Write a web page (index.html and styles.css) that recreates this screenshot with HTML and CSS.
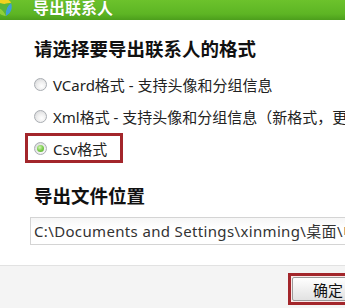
FILE: index.html
```html
<!DOCTYPE html>
<html lang="zh-CN">
<head>
    <meta charset="UTF-8">
    <title>导出联系人</title>
    <link rel="stylesheet" href="styles.css">
</head>
<body>
    <div class="window">
        <div class="titlebar">
            <svg class="logo" width="16" height="20" viewBox="0 0 16 20">
                <path d="M-4 2 C2 -2 9 -1 11 4 C6 5 1 6 -4 2 Z" fill="#f3d21f"/>
                <path d="M11 4 C13 9 11 14 6 17 C5 12 7 7 11 4 Z" fill="#3fa0d8"/>
                <path d="M6 17 C1 17 -3 13 -4 8 C1 9 4 12 6 17 Z" fill="#8fd03a"/>
                <path d="M-4 2 C1 6 6 5 11 4 C7 7 5 12 6 17 C4 12 1 9 -4 8 Z" fill="#59b53a"/>
            </svg>
            <span class="title">导出联系人</span>
        </div>

        <div class="content">
            <h2 class="heading">请选择要导出联系人的格式</h2>

            <label class="option">
                <span class="radio"></span>
                <span>VCard格式 - 支持头像和分组信息</span>
            </label>
            <label class="option">
                <span class="radio"></span>
                <span>Xml格式 - 支持头像和分组信息（新格式，更好的兼容性）</span>
            </label>
            <label class="option">
                <span class="option-mark">
                    <span class="radio checked"></span>
                    <span>Csv格式</span>
                </span>
            </label>

            <h2 class="heading heading-path">导出文件位置</h2>
            <div class="path-box">C:\Documents and Settings\xinming\桌面\电话本.csv</div>
        </div>

        <div class="footer">
            <div class="btn-mark">
                <button class="btn">确定</button>
            </div>
        </div>
    </div>
</body>
</html>
```

FILE: styles.css
```css
* {
    margin: 0;
    padding: 0;
    box-sizing: border-box;
}

body {
    font-family: "Noto Sans", "Noto Sans CJK SC", sans-serif;
    background: #fff;
}

.window {
    width: 345px;
    height: 308px;
    overflow: hidden;
    background: #fff;
}

.titlebar {
    height: 20px;
    display: flex;
    align-items: center;
    background: linear-gradient(to bottom, #6cc22c 0%, #5db524 70%, #4c9e1c 100%);
    overflow: hidden;
}

.logo {
    flex: none;
    margin-top: -2px;
}

.title {
    margin-left: 17px;
    margin-top: -5px;
    color: #fff;
    font-size: 16px;
    line-height: 20px;
    font-weight: bold;
    white-space: nowrap;
    text-shadow: 0 0 1px rgba(40, 90, 10, 0.4);
}

.content {
    padding: 17px 0 20px 34px;
    height: 245px;
}

.heading {
    font-size: 18.5px;
    line-height: 24px;
    font-weight: bold;
    color: #111;
    white-space: nowrap;
}

.option {
    display: flex;
    align-items: center;
    height: 32px;
    font-size: 15px;
    color: #222;
    white-space: nowrap;
}

.content .heading + .option {
    margin-top: 7px;
}

.option .radio {
    margin-right: 6px;
}

.radio {
    flex: none;
    width: 13px;
    height: 13px;
    border-radius: 50%;
    border: 1px solid #a9adb2;
    background: radial-gradient(circle at 60% 65%, #ffffff 0%, #eeeeee 45%, #cfd0d3 100%);
    display: inline-flex;
    align-items: center;
    justify-content: center;
}

.radio.checked::after {
    content: "";
    width: 7px;
    height: 7px;
    border-radius: 50%;
    background: radial-gradient(circle at 40% 35%, #d6f5b8 0%, #7ccd4d 50%, #4ea62a 100%);
}

.option-mark {
    display: flex;
    align-items: center;
    height: 30px;
    width: 98px;
    margin-left: -9px;
    padding-left: 6px;
    border: 3px solid #a3262b;
}

.heading-path {
    margin-top: 20px;
}

.path-box {
    margin-top: 9px;
    margin-left: -4px;
    height: 28px;
    width: 340px;
    border: 1px solid #d4d4d4;
    border-right: none;
    background: linear-gradient(to bottom, #f6f6f6 0%, #ffffff 40%);
    padding-left: 3px;
    font-size: 15px;
    line-height: 26px;
    letter-spacing: 0.35px;
    color: #333;
    white-space: nowrap;
    overflow: hidden;
}

.footer {
    height: 43px;
    border-top: 1px solid #e2e2e2;
    background: #f4f4f4;
    display: flex;
    padding-left: 288px;
    padding-top: 7px;
}

.btn-mark {
    flex: none;
    width: 90px;
    height: 32px;
    border: 3px solid #a3262b;
    padding: 1px;
    background: #fbe9e9;
}

.btn {
    width: 100%;
    height: 100%;
    border: 1px solid #9a9a9a;
    border-radius: 2px;
    background: linear-gradient(to bottom, #ffffff 0%, #f0f0f0 50%, #e2e2e2 100%);
    font-family: "Noto Sans CJK SC", sans-serif;
    font-size: 15px;
    color: #111;
    padding-left: 20px;
    text-align: left;
}
```
